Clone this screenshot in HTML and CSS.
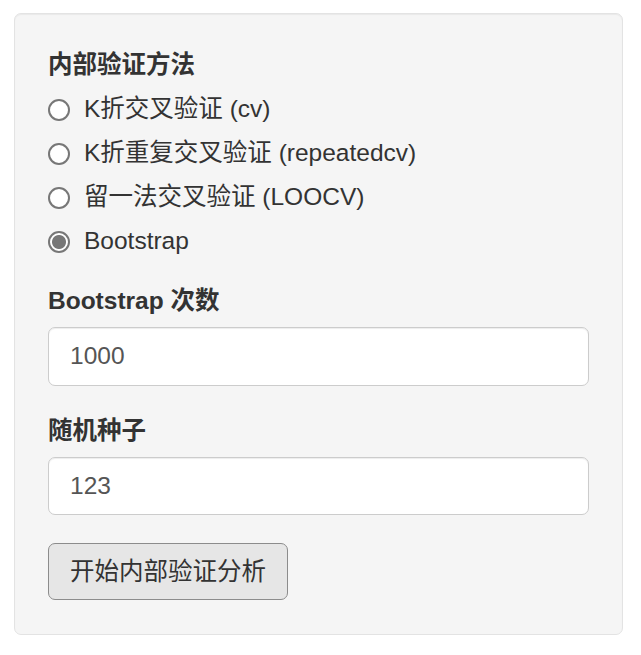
FILE: index.html
```html
<!DOCTYPE html>
<html lang="zh-CN">
<head>
<meta charset="utf-8">
<title>内部验证</title>
<link rel="stylesheet" href="styles.css">
</head>
<body>
<div class="page">
  <div class="well">
    <div class="form-group radio-group">
      <label class="control-label">内部验证方法</label>
      <div class="options">
        <label class="radio"><input type="radio" name="method" value="cv"><span>K折交叉验证 (cv)</span></label>
        <label class="radio"><input type="radio" name="method" value="repeatedcv"><span>K折重复交叉验证 (repeatedcv)</span></label>
        <label class="radio"><input type="radio" name="method" value="LOOCV"><span>留一法交叉验证 (LOOCV)</span></label>
        <label class="radio"><input type="radio" name="method" value="boot" checked><span>Bootstrap</span></label>
      </div>
    </div>
    <div class="form-group">
      <label class="control-label" for="nboot">Bootstrap 次数</label>
      <input class="form-control" id="nboot" type="number" value="1000">
    </div>
    <div class="form-group last">
      <label class="control-label" for="seed">随机种子</label>
      <input class="form-control" id="seed" type="number" value="123">
    </div>
    <button class="btn" type="button">开始内部验证分析</button>
  </div>
</div>
</body>
</html>
```

FILE: styles.css
```css
* { box-sizing: border-box; }

html, body {
  margin: 0;
  padding: 0;
  background: #ffffff;
}

body {
  font-family: "Liberation Sans", Arial, "Noto Sans CJK SC", sans-serif;
  font-size: 24.5px;
  line-height: 35px;
  color: #333333;
}

.page {
  padding: 13px 18px 0 14px;
}

.well {
  background: #f5f5f5;
  border: 1px solid #e3e3e3;
  border-radius: 7px;
  padding: 33px 33px 34px 33px;
  box-shadow: inset 0 1px 1px rgba(0,0,0,0.05);
  display: flex;
  flex-direction: column;
  align-items: flex-start;
}

.form-group {
  display: flex;
  flex-direction: column;
  align-self: stretch;
  margin-bottom: 27px;
}

.radio-group { margin-bottom: 25px; }
.form-group.last { margin-bottom: 28px; }

.control-label {
  font-weight: bold;
  line-height: 35px;
  margin-bottom: 9px;
}

.options {
  display: flex;
  flex-direction: column;
  gap: 9px;
}

.radio {
  display: flex;
  align-items: center;
  height: 35px;
  gap: 14px;
  cursor: pointer;
}

.radio input {
  appearance: none;
  -webkit-appearance: none;
  margin: 2px 0 0 0;
  width: 22px;
  height: 22px;
  border: 2px solid #777777;
  border-radius: 50%;
  background: #ffffff;
  flex: none;
}

.radio input:checked {
  background: radial-gradient(circle, #777777 0 6.5px, #ffffff 7.5px);
}

.form-control {
  height: 58.5px;
  width: 100%;
  border: 1px solid #cccccc;
  border-radius: 7px;
  background: #ffffff;
  padding: 0 21px;
  font-family: "Liberation Sans", Arial, sans-serif;
  font-size: 24.5px;
  color: #555555;
  box-shadow: inset 0 1px 1px rgba(0,0,0,0.075);
  -moz-appearance: textfield;
}

.form-control::-webkit-outer-spin-button,
.form-control::-webkit-inner-spin-button {
  -webkit-appearance: none;
  margin: 0;
}

.btn {
  height: 57px;
  padding: 0 21px;
  border: 1px solid #8c8c8c;
  border-radius: 7px;
  background: #e6e6e6;
  color: #333333;
  font-family: "Liberation Sans", Arial, "Noto Sans CJK SC", sans-serif;
  font-size: 24.5px;
  line-height: 35px;
}
```
